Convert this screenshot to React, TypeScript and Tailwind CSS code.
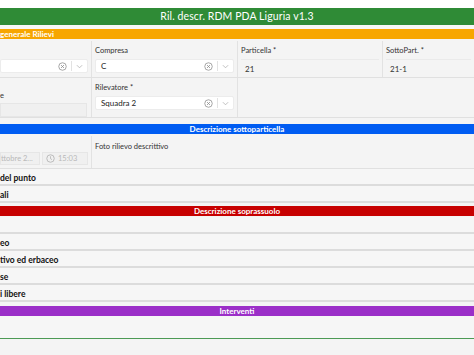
import React from 'react';

const font = { fontFamily: 'Lato, "Open Sans", sans-serif' };

const ClearIcon = () => (
  <svg width="9" height="9" viewBox="0 0 12 12" className="text-[#8a8a8a]">
    <circle cx="6" cy="6" r="5" fill="none" stroke="currentColor" strokeWidth="1" />
    <path d="M4 4l4 4M8 4l-4 4" stroke="currentColor" strokeWidth="1" />
  </svg>
);

const Chevron = () => (
  <svg width="7" height="5" viewBox="0 0 8 5" className="text-[#b0b0b0]">
    <path d="M1 1l3 3 3-3" fill="none" stroke="currentColor" strokeWidth="0.9" />
  </svg>
);

const ClockIcon = () => (
  <svg width="9" height="9" viewBox="0 0 12 12" className="text-[#b5b5b5]">
    <circle cx="6" cy="6" r="5" fill="none" stroke="currentColor" strokeWidth="1.2" />
    <path d="M6 3v3.2l2 1.3" fill="none" stroke="currentColor" strokeWidth="1.1" />
  </svg>
);

const Select = ({ value }: { value: string }) => (
  <div className="flex h-[14px] items-center bg-white border border-[#ececec] rounded-[2px]">
    <span className="flex-1 pl-[5px] text-[8px] text-[#222] truncate">{value}</span>
    <span className="px-[4px] flex items-center"><ClearIcon /></span>
    <span className="h-[10px] w-px bg-[#e2e2e2]" />
    <span className="px-[4px] flex items-center"><Chevron /></span>
  </div>
);

const Field = ({ label, children, last }: { label?: string; children?: React.ReactNode; last?: boolean }) => (
  <div className={`px-[3px] pt-[5px] ${last ? '' : 'border-r border-[#e2e2e2]'}`}>
    {label && <div className="text-[7.5px] text-[#333] h-[10px] leading-[10px] mb-[3px]">{label}</div>}
    {children}
  </div>
);

const Bar = ({ text, color }: { text: string; color: string }) => (
  <div className={`h-[10px] flex items-center justify-center text-white font-bold text-[8px] leading-none ${color}`}>
    {text}
  </div>
);

const Row = ({ text }: { text?: string }) => (
  <div className="h-[17px] flex items-center pt-[3px] bg-[#f6f6f6] border-b-2 border-[#dcdcdc] text-[8.5px] font-bold text-[#111]">
    {text}
  </div>
);

export default function App() {
  return (
    <div className="w-[474px] h-[355px] overflow-hidden bg-[#f4f4f4]" style={font}>
      <div className="h-[8px] bg-white" />
      <div className="h-[17px] bg-[#2f8b36] flex items-center justify-center text-white text-[10.5px] tracking-[0.1px]">
        Ril. descr. RDM PDA Liguria v1.3
      </div>
      <div className="h-[4px] bg-[#f7f7f7]" />
      <div className="h-[10px] bg-[#f7a600] flex items-center text-white font-bold text-[8px] leading-none">
        generale Rilievi
      </div>
      <div className="h-[2px]" />

      <div className="grid grid-cols-[92px_146px_145px_1fr] border-b border-[#e0e0e0]">
        <Field>
          <div className="h-[13px]" />
          <div className="-ml-[3px]"><Select value="" /></div>
        </Field>
        <Field label="Compresa"><Select value="C" /></Field>
        <Field label="Particella *">
          <div className="h-[18px] mt-[1px] flex items-center border-t border-[#eaeaea] px-[4px] text-[8px] text-[#333]">21</div>
        </Field>
        <Field label="SottoPart. *" last>
          <div className="h-[18px] mt-[1px] flex items-center border-t border-[#eaeaea] px-[4px] text-[8px] text-[#333]">21-1</div>
        </Field>
      </div>

      <div className="grid grid-cols-[92px_146px_1fr] h-[40px] border-b border-[#e0e0e0]">
        <div className="border-r border-[#e2e2e2] pt-[13px]">
          <div className="text-[7.5px] text-[#333] leading-[10px]">e</div>
          <div className="mt-[2px] mr-[4px] h-[14px] bg-[#f0f0f0] border border-[#e6e6e6]" />
        </div>
        <Field label="Rilevatore *"><Select value="Squadra 2" /></Field>
        <div />
      </div>

      <div className="h-[6px]" />
      <Bar text="Descrizione sottoparticella" color="bg-[#005cf2]" />
      <div className="h-[2px]" />

      <div className="grid grid-cols-[92px_1fr] h-[33px] border-b border-[#e0e0e0]">
        <div className="border-r border-[#e2e2e2] pt-[16px] flex gap-[2px] pr-[3px]">
          <div className="w-[40px] h-[13px] bg-[#f0f0f0] border border-[#e6e6e6] flex items-center text-[7.5px] text-[#b8b8b8] whitespace-nowrap overflow-hidden">ttobre 2...</div>
          <div className="flex-1 h-[13px] bg-[#f0f0f0] border border-[#e6e6e6] flex items-center gap-[3px] pl-[3px] text-[7.5px] text-[#b8b8b8]">
            <ClockIcon />15:03
          </div>
        </div>
        <div className="px-[3px] pt-[5px] text-[7.5px] text-[#333]">Foto rilievo descrittivo</div>
      </div>

      <Row text="del punto" />
      <Row text="ali" />
      <div className="h-[3px]" />
      <Bar text="Descrizione soprassuolo" color="bg-[#c70000]" />
      <div className="h-[1px]" />
      <Row />
      <Row text="eo" />
      <Row text="tivo ed erbaceo" />
      <Row text="se" />
      <Row text="i libere" />
      <div className="h-[4px]" />
      <Bar text="Interventi" color="bg-[#9b2fc8]" />
      <div className="h-[23px] bg-[#f6f6f6] border-b border-[#4c9a55]" />
    </div>
  );
}
